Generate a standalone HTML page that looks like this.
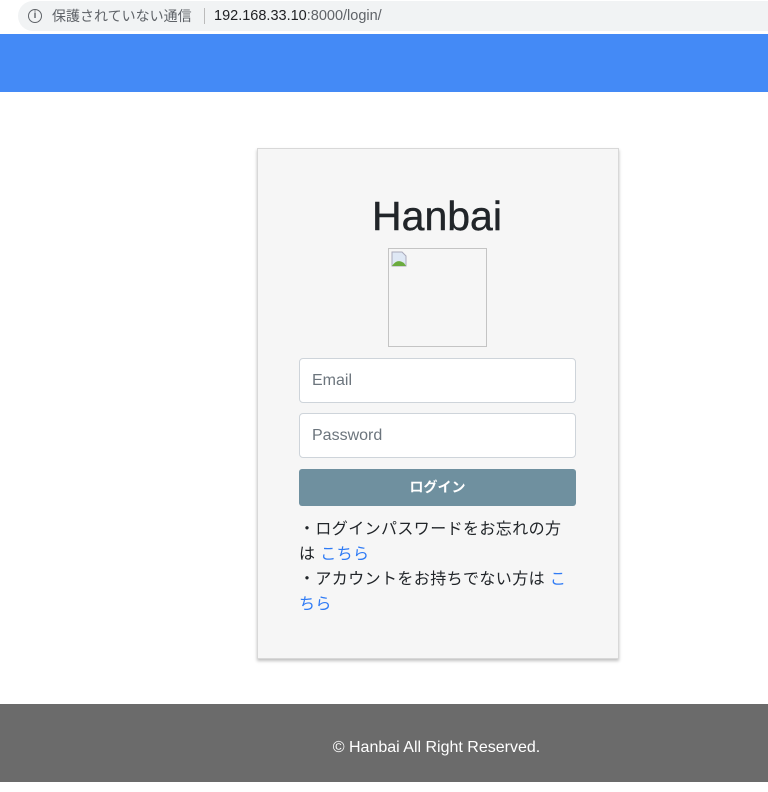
<!DOCTYPE html>
<html><head><meta charset="utf-8"><style>
*{box-sizing:border-box;margin:0;padding:0}
body{width:768px;height:782px;position:relative;background:#fff;font-family:"Liberation Sans","Noto Sans CJK JP",sans-serif;color:#212529;overflow:hidden}
.bar{position:absolute;left:0;top:0;width:768px;height:34px;background:#fff}
.addr{position:absolute;left:18px;top:1px;width:780px;height:30px;background:#f1f3f4;border-radius:15px;font-size:14px;line-height:30px;color:#5f6368}
.addr .i{position:absolute;left:10px;top:8px;width:14px;height:14px;border:1.5px solid #5f6368;border-radius:50%;font-size:10px;line-height:11px;text-align:center;font-weight:bold}
.addr .t{position:absolute;left:34px}
.addr .sep{position:absolute;left:186px;top:7px;width:1px;height:16px;background:#bbb}
.addr .u{position:absolute;left:196px;color:#202124;font-size:14.5px}
.blue{position:absolute;left:0;top:34px;width:768px;height:58px;background:#448af6}
.card{position:absolute;left:257px;top:148px;width:362px;height:511px;background:#f6f6f6;border:1px solid #d8d8d8;box-shadow:0 2px 3px rgba(0,0,0,.25)}
h1{position:absolute;left:0;width:360px;top:192px;text-align:center;font-weight:normal;font-size:41px;line-height:48px;-webkit-text-stroke:0.4px #212529}
.img{position:absolute;left:388px;top:248px;width:99px;height:99px;border:1px solid #c4c4c4}
.inp{position:absolute;left:299px;width:277px;height:45px;background:#fff;border:1px solid #ced4da;border-radius:4px;font-size:16px;color:#6c757d;padding-left:12px;line-height:44px}
.btn{position:absolute;left:299px;top:469px;width:277px;height:37px;background:#6f909f;border-radius:3px;color:#fff;font-weight:bold;font-size:14px;text-align:center;line-height:37px}
.txt{position:absolute;left:299px;top:517px;width:277px;font-size:16px;line-height:25px;letter-spacing:0.4px}
a{color:#2f7bf5;text-decoration:none}
.foot{position:absolute;left:0;top:704px;width:768px;height:78px;background:#6b6b6b;color:#fff;font-size:16px;text-align:center;line-height:88px;padding-left:105px}
</style></head><body>
<div class="bar"><div class="addr"><span class="i">i</span><span class="t">保護されていない通信</span><span class="sep"></span><span class="u">192.168.33.10<span style="color:#5f6368">:8000/login/</span></span></div></div>
<div class="blue"></div>
<div class="card"></div>
<h1 style="left:257px">Hanbai</h1>
<div class="img"><svg width="16" height="16" style="position:absolute;left:2px;top:2px"><path d="M1 1h10l4 4v10H1z" fill="#dfe8f5" stroke="#aab"/><path d="M1 15 Q6 7 13 12 L15 15z" fill="#6bab3e"/></svg></div>
<div class="inp" style="top:358px">Email</div>
<div class="inp" style="top:413px">Password</div>
<div class="btn">ログイン</div>
<div class="txt">・ログインパスワードをお忘れの方は <a>こちら</a><br>・アカウントをお持ちでない方は <a>こちら</a></div>
<div class="foot">© Hanbai All Right Reserved.</div>
</body></html>
